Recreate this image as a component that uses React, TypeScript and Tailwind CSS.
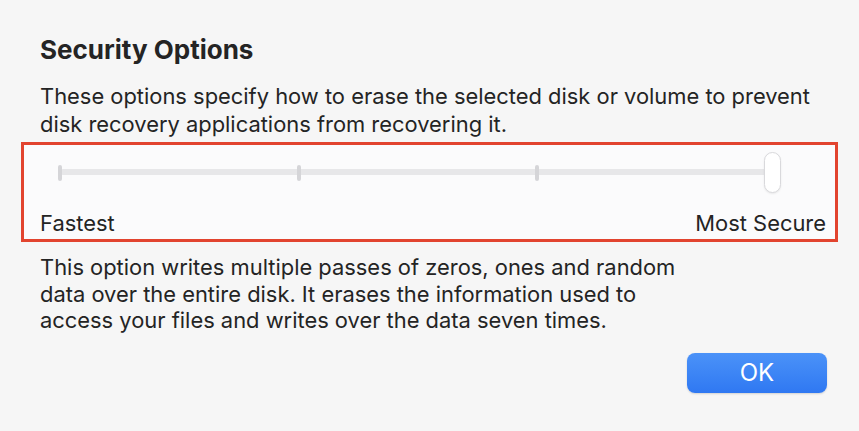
import React from "react";

const ticks = [0, 1, 2];

export default function App() {
  return (
    <div
      className="w-[859px] h-[431px] bg-[#f6f6f6] text-[#242424] overflow-hidden"
      style={{ fontFamily: "Inter, 'Noto Sans', sans-serif" }}
    >
      <div className="px-[40px] pt-[35px]">
        <h1 className="text-[26px] font-bold leading-[30px]">Security Options</h1>
        <p className="mt-[17px] text-[21.9px] leading-[28px]">
          These options specify how to erase the selected disk or volume to prevent
          <br />
          disk recovery applications from recovering it.
        </p>
      </div>

      <div className="mx-[21px] mt-[4px] h-[100px] border-[3px] border-[#e2442f] bg-[#fbfbfc] pl-[16px] pr-[9px] pt-[7px]">
        <div className="relative ml-[18px] w-[723px] h-[41px]">
          <div className="absolute left-[2px] right-[8px] top-[17px] h-[6px] rounded-full bg-[#e7e7e9]" />
          <div className="absolute left-0 w-[720px] top-[13px] flex justify-between">
            {ticks.map((t) => (
              <div key={t} className="w-[4px] h-[16px] rounded-full bg-[#d5d5d8]" />
            ))}
            <div className="w-[4px] h-[16px]" />
          </div>
          <div className="absolute right-0 top-0 w-[17px] h-[41px] rounded-full bg-white border border-[#d9d9dc] shadow-[0_1px_2px_rgba(0,0,0,0.08)]" />
        </div>
        <div className="mt-[17px] flex justify-between text-[21.9px] leading-[26px]">
          <span>Fastest</span>
          <span>Most Secure</span>
        </div>
      </div>

      <p className="mx-[40px] mt-[12px] text-[21.9px] leading-[26.5px]">
        This option writes multiple passes of zeros, ones and random
        <br />
        data over the entire disk. It erases the information used to
        <br />
        access your files and writes over the data seven times.
      </p>

      <div className="flex justify-end pr-[32px] mt-[19px]">
        <button className="w-[140px] h-[40px] rounded-[8px] bg-gradient-to-b from-[#4b92f8] to-[#2f78f2] text-white text-[24px] leading-none shadow-[0_1px_2px_rgba(0,0,0,0.15)]">
          OK
        </button>
      </div>
    </div>
  );
}
